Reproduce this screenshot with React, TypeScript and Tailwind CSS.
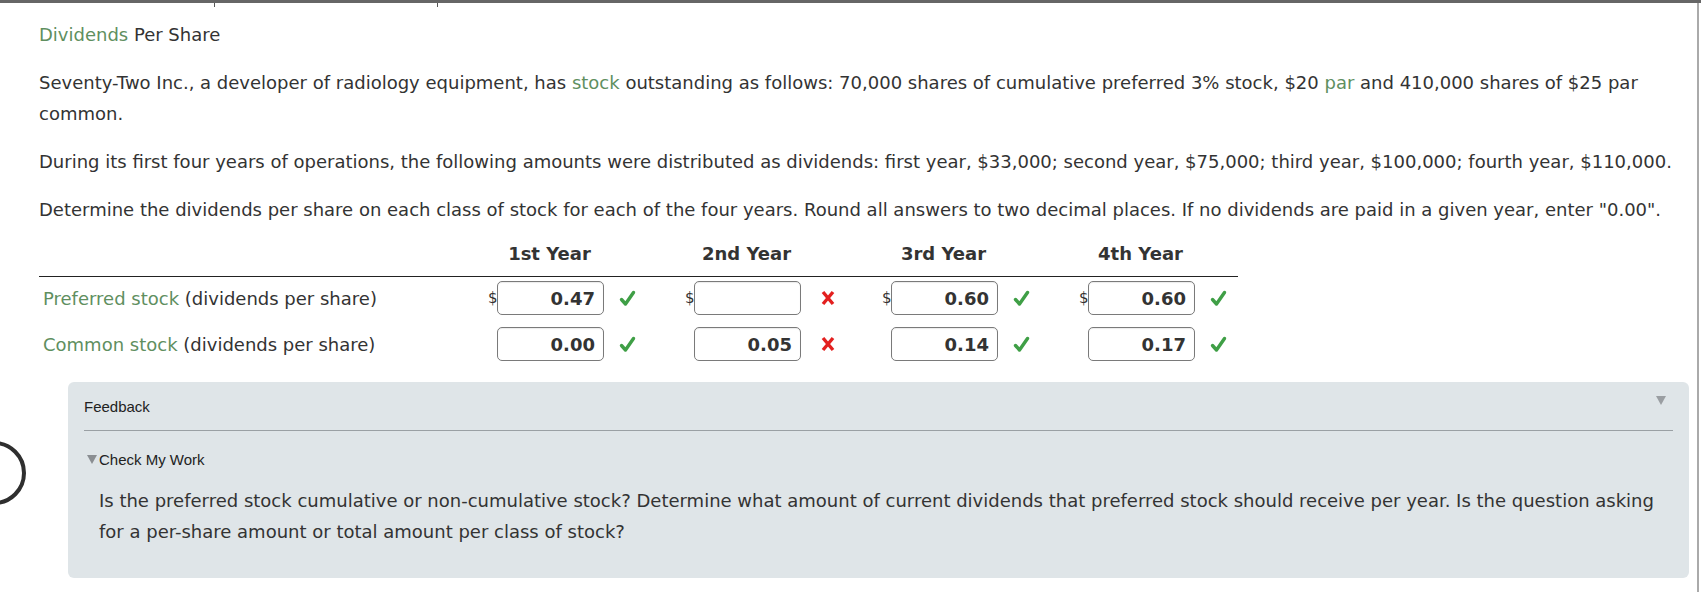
import React from 'react'

const green = 'text-[#5f8f5f]'

function Check() {
  return (
    <svg width="17" height="17" viewBox="0 0 17 17" className="block">
      <path d="M2.5 9.5 L6.5 14 L14.5 2.5" fill="none" stroke="#3f9f46" strokeWidth="3.4" strokeLinecap="round" strokeLinejoin="round" />
    </svg>
  )
}

function Cross() {
  return (
    <svg width="14" height="16" viewBox="0 0 14 16" className="block">
      <path d="M2 2 L12 14 M12 2 L2 14" fill="none" stroke="#e3201f" strokeWidth="3.4" strokeLinecap="butt" />
    </svg>
  )
}

type Cell = { value: string; ok: boolean }

const years = ['1st Year', '2nd Year', '3rd Year', '4th Year']

const rows: { label: string; dollar: boolean; cells: Cell[] }[] = [
  {
    label: 'Preferred stock',
    dollar: true,
    cells: [
      { value: '0.47', ok: true },
      { value: '', ok: false },
      { value: '0.60', ok: true },
      { value: '0.60', ok: true },
    ],
  },
  {
    label: 'Common stock',
    dollar: false,
    cells: [
      { value: '0.00', ok: true },
      { value: '0.05', ok: false },
      { value: '0.14', ok: true },
      { value: '0.17', ok: true },
    ],
  },
]

export default function App() {
  return (
    <div className="relative w-[1701px] h-[592px] overflow-hidden bg-white border-t-[3px] border-[#666] font-['DejaVu_Sans',sans-serif] text-[#333]">
      {/* little ticks under the top edge */}
      <div className="absolute left-[214px] top-0 w-px h-[4px] bg-[#555]" />
      <div className="absolute left-[437px] top-0 w-px h-[4px] bg-[#555]" />
      {/* right edge */}
      <div className="absolute right-[2px] top-0 w-[2px] h-full bg-[#aaa]" />

      <div className="pl-[39px] pr-[10px]">
        <h1 className="mt-[21px] text-[18px] leading-[22px]">
          <span className={green}>Dividends</span> Per Share
        </h1>

        <p className="mt-[21px] text-[18px] leading-[31px]">
          Seventy-Two Inc., a developer of radiology equipment, has <span className={green}>stock</span> outstanding as
          follows: 70,000 shares of cumulative preferred 3% stock, $20 <span className={green}>par</span> and 410,000
          shares of $25 par common.
        </p>

        <p className="mt-[17px] text-[18px] leading-[31px]">
          During its first four years of operations, the following amounts were distributed as dividends: first year,
          $33,000; second year, $75,000; third year, $100,000; fourth year, $110,000.
        </p>

        <p className="mt-[17px] text-[18px] leading-[31px]">
          Determine the dividends per share on each class of stock for each of the four years. Round all answers to two
          decimal places. If no dividends are paid in a given year, enter "0.00".
        </p>

        <div className="w-[1199px] mt-[18px]">
          <div className="grid grid-cols-[412px_repeat(4,197px)] border-b border-[#222] pb-[11px]">
            <div />
            {years.map(y => (
              <div key={y} className="text-center font-bold text-[18px] leading-[22px]">{y}</div>
            ))}
          </div>

          {rows.map((row, ri) => (
            <div
              key={row.label}
              className={`grid grid-cols-[412px_repeat(4,197px)] items-center h-[34px] ${ri === 0 ? 'mt-[4px]' : 'mt-[12px]'}`}
            >
              <div className="text-[18px] pl-[4px]">
                <span className={green}>{row.label}</span> (dividends per share)
              </div>
              {row.cells.map((c, ci) => (
                <div key={ci} className="flex items-center pl-[37px]">
                  <span className={`w-[9px] text-[15px] ${row.dollar ? '' : 'invisible'}`}>$</span>
                  <div className="w-[107px] h-[34px] border border-[#7a7a7a] rounded-[5px] bg-white flex items-center justify-end pr-[8px] font-bold text-[18px] text-[#333] shadow-[inset_0_1px_1px_rgba(0,0,0,0.08)]">
                    {c.value}
                  </div>
                  <div className={c.ok ? 'ml-[15px]' : 'ml-[20px]'}>{c.ok ? <Check /> : <Cross />}</div>
                </div>
              ))}
            </div>
          ))}
        </div>
      </div>

      <div className="ml-[68px] mr-[12px] mt-[21px] h-[196px] rounded-[6px] bg-[#dfe5e8] px-[16px] relative">
        <div className="absolute right-[23px] top-[14px] w-0 h-0 border-l-[5px] border-r-[5px] border-t-[9px] border-l-transparent border-r-transparent border-t-[#9a9ea2]" />
        <div className="font-['Liberation_Sans',sans-serif] text-[15px] leading-[17px] pt-[16px] pb-[15px] text-[#222]">
          Feedback
        </div>
        <div className="h-px bg-[#9aa0a4]" />
        <div className="flex items-center mt-[20px] pl-[3px] font-['Liberation_Sans',sans-serif] text-[15px] leading-[17px] text-[#222]">
          <span className="w-0 h-0 mr-[2px] border-l-[5px] border-r-[5px] border-t-[9px] border-l-transparent border-r-transparent border-t-[#8a8e92]" />
          Check My Work
        </div>
        <p className="pl-[15px] pr-[4px] mt-[17px] text-[18px] leading-[31px] text-[#333]">
          Is the preferred stock cumulative or non-cumulative stock? Determine what amount of current dividends that
          preferred stock should receive per year. Is the question asking for a per-share amount or total amount per
          class of stock?
        </p>
      </div>

      <div className="absolute left-[-38px] top-[438px] w-[64px] h-[64px] rounded-full border-[4px] border-[#2f2f2f]" />
    </div>
  )
}
